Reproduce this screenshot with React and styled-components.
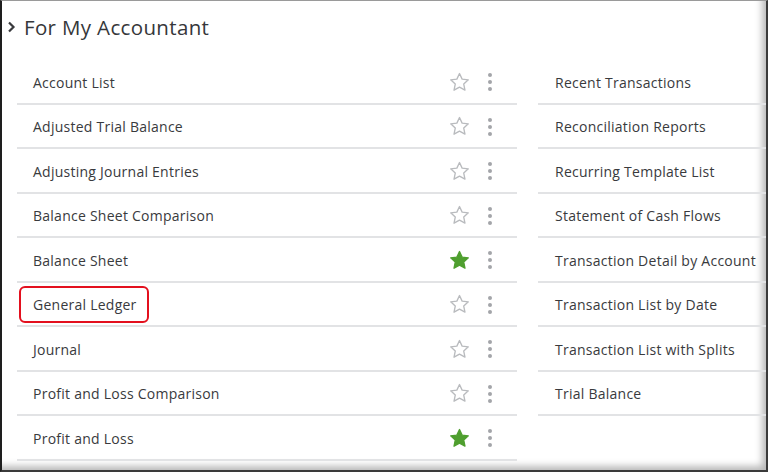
import React from "react";
import styled, { createGlobalStyle } from "styled-components";

const GlobalStyle = createGlobalStyle`
  html, body {
    margin: 0;
    padding: 0;
    background: #ffffff;
  }
  body {
    font-family: "Open Sans", "Liberation Sans", sans-serif;
  }
`;

const Frame = styled.div`
  box-sizing: border-box;
  width: 768px;
  height: 472px;
  overflow: hidden;
  background: #ffffff;
  border-left: 2px solid #1e1e1e;
  border-top: 1px solid #9a9a9a;
  border-right: 2px solid #3a3a3a;
  border-bottom: 2px solid #3a3a3a;
  box-shadow: inset -7px -7px 7px -3px rgba(0, 0, 0, 0.28);
  padding: 0 0 0 15px;
`;

const Header = styled.div`
  display: flex;
  align-items: center;
  height: 59px;
  margin-left: -10px;
  gap: 8px;
`;

const Chevron = styled.svg`
  width: 9px;
  height: 12px;
  margin-top: -8px;
`;

const Title = styled.h2`
  margin: 0;
  margin-top: -8px;
  font-family: "Open Sans", "Liberation Sans", sans-serif;
  font-size: 20.5px;
  font-weight: 500;
  color: #36373a;
  letter-spacing: 0.35px;
`;

const Columns = styled.div`
  display: grid;
  grid-template-columns: 500px 1fr;
  column-gap: 21px;
  align-items: start;
`;

const List = styled.div`
  display: flex;
  flex-direction: column;
`;

const Row = styled.div`
  box-sizing: border-box;
  height: 44.5px;
  display: flex;
  align-items: center;
  border-bottom: 2px solid #e2e3e5;
  padding-left: ${(p) => (p.$right ? "17px" : "16px")};
  padding-right: 25px;
`;

const Label = styled.span`
  flex: 1;
  display: flex;
  align-items: center;
  min-width: 0;
  margin-top: 2px;
`;

const Text = styled.span`
  font-size: 14px;
  color: #393a3d;
  white-space: nowrap;
  letter-spacing: 0.25px;
  padding: ${(p) => (p.$marked ? "7px 10px 7px 12px" : "0")};
  margin-left: ${(p) => (p.$marked ? "-14px" : "0")};
  border: ${(p) => (p.$marked ? "2px solid #e3101e" : "none")};
  border-radius: 6px;
`;

const Actions = styled.div`
  display: flex;
  align-items: center;
  gap: 17px;
  margin-top: 2px;
`;

const Dots = styled.div`
  display: flex;
  flex-direction: column;
  gap: 3px;
  width: 4px;

  span {
    width: 4px;
    height: 4px;
    border-radius: 50%;
    background: #a3a5a9;
  }
`;

const StarPath =
  "M12 2.6l2.75 5.9 6.45.75-4.78 4.4 1.28 6.37L12 16.8l-5.7 3.22 1.28-6.37L2.8 9.25l6.45-.75z";

const Star = ({ on }) => (
  <svg width="23" height="23" viewBox="0 0 24 24">
    <path
      d={StarPath}
      fill={on ? "#4f9f2f" : "none"}
      stroke={on ? "#4f9f2f" : "#b9bbbe"}
      strokeWidth="1.4"
      strokeLinejoin="round"
    />
  </svg>
);

const leftItems = [
  { name: "Account List" },
  { name: "Adjusted Trial Balance" },
  { name: "Adjusting Journal Entries" },
  { name: "Balance Sheet Comparison" },
  { name: "Balance Sheet", fav: true },
  { name: "General Ledger", marked: true },
  { name: "Journal" },
  { name: "Profit and Loss Comparison" },
  { name: "Profit and Loss", fav: true },
];

const rightItems = [
  "Recent Transactions",
  "Reconciliation Reports",
  "Recurring Template List",
  "Statement of Cash Flows",
  "Transaction Detail by Account",
  "Transaction List by Date",
  "Transaction List with Splits",
  "Trial Balance",
];

const App = () => {
  return (
    <>
      <GlobalStyle />
      <Frame>
        <Header>
          <Chevron viewBox="0 0 9 12">
            <path d="M2 1.5l4.5 4.5L2 10.5" fill="none" stroke="#393a3d" strokeWidth="2.2" />
          </Chevron>
          <Title>For My Accountant</Title>
        </Header>
        <Columns>
          <List>
            {leftItems.map((item) => (
              <Row key={item.name}>
                <Label>
                  <Text $marked={item.marked}>{item.name}</Text>
                </Label>
                <Actions>
                  <Star on={item.fav} />
                  <Dots>
                    <span />
                    <span />
                    <span />
                  </Dots>
                </Actions>
              </Row>
            ))}
          </List>
          <List>
            {rightItems.map((name) => (
              <Row key={name} $right>
                <Label>
                  <Text>{name}</Text>
                </Label>
              </Row>
            ))}
          </List>
        </Columns>
      </Frame>
    </>
  );
};

export default App;
